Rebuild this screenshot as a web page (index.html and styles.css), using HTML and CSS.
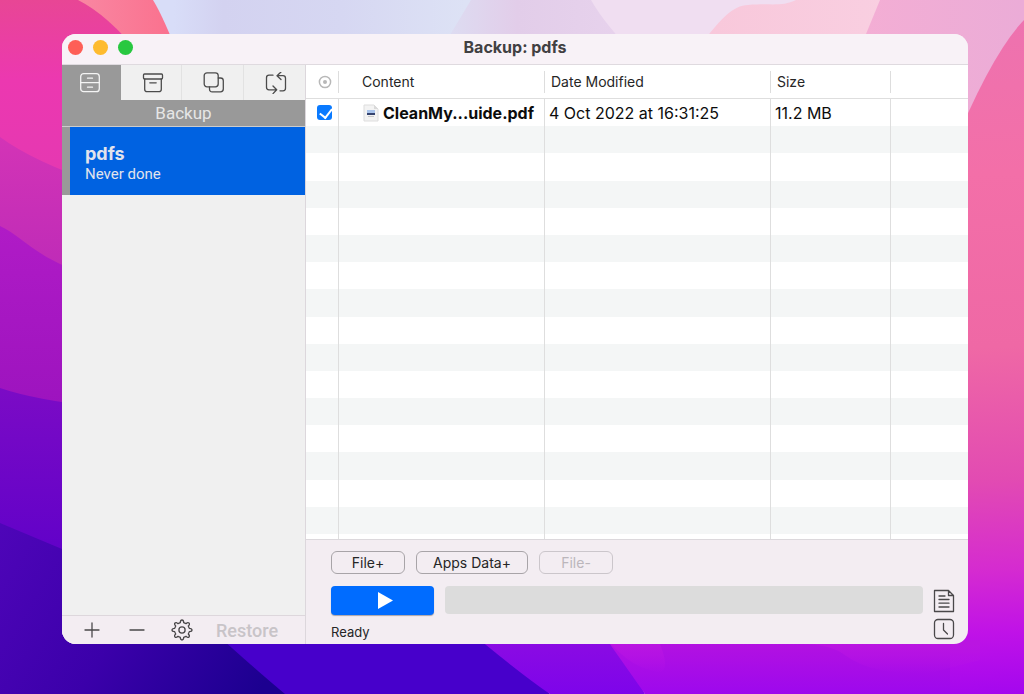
FILE: index.html
```html
<!DOCTYPE html>
<html lang="en">
<head>
<meta charset="utf-8">
<meta name="viewport" content="width=device-width, initial-scale=1">
<title>Backup: pdfs</title>
<link rel="stylesheet" href="styles.css">
</head>
<body>
<div class="desktop">
  <svg class="wallpaper" viewBox="0 0 1024 694" preserveAspectRatio="none" aria-hidden="true">
    <defs>
      <linearGradient id="sky" x1="0" x2="1" y1="0" y2="0"><stop offset="0" stop-color="#d8ddf8"/><stop offset=".28" stop-color="#d8ddf8"/><stop offset=".36" stop-color="#d3d2f0"/><stop offset=".55" stop-color="#d6d7f2"/><stop offset=".75" stop-color="#dde2f5"/><stop offset="1" stop-color="#dde2f5"/></linearGradient>
      <linearGradient id="coral" x1="0" x2="1" y1="0" y2="0"><stop offset="0" stop-color="#f98ba6"/><stop offset="1" stop-color="#fa6f8c"/></linearGradient>
      <linearGradient id="pink" x1="0" x2="0" y1="0" y2="1"><stop offset="0" stop-color="#e84695"/><stop offset=".4" stop-color="#ec38b0"/><stop offset="1" stop-color="#e338b2"/></linearGradient>
      <linearGradient id="rose" x1="0" x2="0" y1="0" y2="1"><stop offset="0" stop-color="#d334b6"/><stop offset="1" stop-color="#ba29b8"/></linearGradient>
      <linearGradient id="violet" x1="0" x2="0" y1="0" y2="1"><stop offset="0" stop-color="#b01bc6"/><stop offset="1" stop-color="#9912bd"/></linearGradient>
      <linearGradient id="purple" x1="0" x2="0" y1="0" y2="1"><stop offset="0" stop-color="#7b0bc5"/><stop offset="1" stop-color="#5d00c9"/></linearGradient>
      <linearGradient id="indigo" gradientUnits="userSpaceOnUse" x1="0" x2="260" y1="530" y2="690"><stop offset="0" stop-color="#4e05b8"/><stop offset=".5" stop-color="#3b00aa"/><stop offset="1" stop-color="#1c0090"/></linearGradient>
      <linearGradient id="right" gradientUnits="userSpaceOnUse" x1="980" x2="1010" y1="0" y2="694"><stop offset="0" stop-color="#ed73b0"/><stop offset=".25" stop-color="#f36fa8"/><stop offset=".5" stop-color="#ef68a5"/><stop offset=".69" stop-color="#e24bb2"/><stop offset=".82" stop-color="#d52bd0"/><stop offset=".91" stop-color="#c012e7"/><stop offset="1" stop-color="#a407ee"/></linearGradient>
      <linearGradient id="mauve" x1="0" x2="1" y1="0" y2="0"><stop offset="0" stop-color="#dcdff3"/><stop offset=".4" stop-color="#e2cde9"/><stop offset="1" stop-color="#e8d3ed"/></linearGradient>
      <linearGradient id="blush" x1="0" x2="1" y1="0" y2="0"><stop offset="0" stop-color="#f8c7da"/><stop offset="1" stop-color="#f9cfe1"/></linearGradient>
      <linearGradient id="orchid" x1="0" x2="1" y1="0" y2="0"><stop offset="0" stop-color="#f4aed4"/><stop offset="1" stop-color="#ebacd7"/></linearGradient>
      <linearGradient id="grape" x1="0" x2="0" y1="0" y2="1"><stop offset="0" stop-color="#910fdf"/><stop offset="1" stop-color="#7e04ea"/></linearGradient>
      <linearGradient id="magenta" gradientUnits="userSpaceOnUse" x1="0" x2="0" y1="640" y2="694"><stop offset="0" stop-color="#b412e0"/><stop offset="1" stop-color="#9d08ed"/></linearGradient>
      <linearGradient id="glow" gradientUnits="userSpaceOnUse" x1="0" x2="0" y1="644" y2="674"><stop offset="0" stop-color="#ba15e1"/><stop offset="1" stop-color="#b511e8" stop-opacity="0"/></linearGradient>
    </defs>
    <path fill="url(#sky)" d="M0 0H620V100H0z"/>
    <path fill="url(#mauve)" d="M471 0H600L640 60H435z"/>
    <path fill="#f0def1" d="M591 0H900V60H640Q605 25 591 0z"/>
    <path fill="url(#blush)" d="M690 60C722 15 733 6 748 5C772 3 782 7 796 0H890V60z"/>
    <path fill="url(#orchid)" d="M880 0H1024V140H850L866 34z"/>
    <path fill="url(#coral)" d="M60 0H153Q164 18 180 60H60z"/>
    <path fill="url(#pink)" d="M0 0H78Q108 15 140 55V200H0z"/>
    <path fill="url(#rose)" d="M0 137Q34 162 100 184V300H0z"/>
    <path fill="url(#violet)" d="M0 226C24 237 38 262 100 278V440H0z"/>
    <path fill="url(#purple)" d="M0 388Q35 400 100 407V580H0z"/>
    <path fill="url(#indigo)" d="M0 523L62 549L190 610Q225 640 286 694H0z"/>
    <path fill="#4700cb" d="M190 610H480L550 694H285Q250 665 190 610z"/>
    <path fill="url(#grape)" d="M450 615H607L645 694H550Q515 670 450 615z"/>
    <path fill="url(#magenta)" d="M600 630H1024V694H645z"/>
    <path fill="url(#right)" d="M1024 20Q991 54 950 155V694H1024z"/>
    <path fill="url(#glow)" d="M611 644H660Q674 680 650 670Q630 665 611 644zM800 644Q832 644 846 656Q875 676 930 673L980 660V640z"/>
  </svg>

  <main class="window">
    <header class="titlebar">
      <div class="lights">
        <button class="light close" aria-label="Close"></button>
        <button class="light minimize" aria-label="Minimize"></button>
        <button class="light expand" aria-label="Zoom"></button>
      </div>
      <h1 class="title">Backup: pdfs</h1>
    </header>

    <div class="body">
      <aside class="sidebar">
        <nav class="tabs" aria-label="Task type">
          <button class="tab active" aria-label="Backup">
            <svg class="icon" viewBox="0 0 22 22"><rect x="1.7" y="1.7" width="18.6" height="18" rx="3"/><path d="M1.7 10.7H20.3M8.5 6.2H13.5M8.5 15.2H13.5"/></svg>
          </button>
          <button class="tab" aria-label="Archive">
            <svg class="icon" viewBox="0 0 22 22"><rect x="1.5" y="2" width="19" height="5" rx="1"/><path d="M2.7 7V17.2Q2.7 19.7 5.2 19.7H16.8Q19.3 19.7 19.3 17.2V7M7.8 10.8H14.2"/></svg>
          </button>
          <button class="tab" aria-label="Clone">
            <svg class="icon" viewBox="0 0 22 22"><rect x="1.2" y=".8" width="14" height="14" rx="2.8"/><path d="M15.3 6H17.5Q20.3 6 20.3 8.8V17Q20.3 19.8 17.5 19.8H9.3Q6.5 19.8 6.5 17V14.8"/></svg>
          </button>
          <button class="tab" aria-label="Synchronize">
            <svg class="icon" viewBox="0 0 22 22"><path d="M8 3.2H4Q1.5 3.2 1.5 5.7V15.3Q1.5 17.8 4 17.8H11.5M8 14L11.7 17.8L8 21.6M15 18.8H18Q20.5 18.8 20.5 16.3V6.2Q20.5 3.7 18 3.7H12M16 0L12 3.7L16 7.5"/></svg>
          </button>
        </nav>
        <h2 class="section">Backup</h2>
        <button class="task">
          <span class="task-name">pdfs</span>
          <span class="task-state">Never done</span>
        </button>
        <div class="side-footer">
          <button class="tool" aria-label="Add"><svg class="icon" viewBox="0 0 22 22"><path d="M4 11H18M11 4V18"/></svg></button>
          <button class="tool" aria-label="Remove"><svg class="icon" viewBox="0 0 22 22"><path d="M4 11H18"/></svg></button>
          <button class="tool" aria-label="Settings"><svg class="icon" viewBox="0 0 22 22"><circle cx="11" cy="11" r="3.1"/><path d="M9.3 3.7Q9.4 1 11 1T12.7 3.7Q13.8 4.2 15 4.7Q16.8 2.9 18 4T17.3 7Q17.8 8.2 18.3 9.3Q21 9.5 21 11T18.3 12.7Q17.8 13.8 17.3 15Q19.1 16.8 18 18T15 17.3Q13.8 17.8 12.7 18.3Q12.6 21 11 21T9.3 18.3Q8.2 17.8 7 17.3Q5.2 19.1 4 18T4.7 15Q4.2 13.8 3.7 12.7Q1 12.5 1 11T3.7 9.3Q4.2 8.2 4.7 7Q2.9 5.2 4 4T7 4.7Q8.2 4.2 9.3 3.7z"/></svg></button>
          <button class="restore" disabled>Restore</button>
        </div>
      </aside>

      <section class="content">
        <div class="files">
          <table class="file-table">
            <colgroup><col class="col-check"><col class="col-name"><col class="col-date"><col class="col-size"><col></colgroup>
            <thead>
              <tr>
                <th class="target" aria-label="Included"><svg class="target-icon" viewBox="0 0 14 14"><circle cx="7" cy="7" r="5.6"/><circle class="dot" cx="7" cy="7" r="2"/></svg></th>
                <th class="name-head">Content</th><th>Date Modified</th><th>Size</th><th></th>
              </tr>
            </thead>
            <tbody>
              <tr>
                <td class="check-cell"><input class="check" type="checkbox" checked aria-label="Include CleanMy…uide.pdf"></td>
                <td><div class="file"><svg class="file-icon" viewBox="0 0 16 18"><path class="sheet" d="M1 1H11L15 5V17H1z"/><path class="fold" d="M11 1V5H15z"/><path class="photo" d="M4 6H12V9H4z"/><path class="band" d="M4 9H12V11H4z"/><path class="lines" d="M5 12H11V13H5z"/></svg><span class="file-name">CleanMy...uide.pdf</span></div></td>
                <td>4 Oct 2022 at 16:31:25</td><td>11.2 MB</td><td></td>
              </tr>
              <tr><td></td><td></td><td></td><td></td><td></td></tr>
              <tr><td></td><td></td><td></td><td></td><td></td></tr>
              <tr><td></td><td></td><td></td><td></td><td></td></tr>
              <tr><td></td><td></td><td></td><td></td><td></td></tr>
              <tr><td></td><td></td><td></td><td></td><td></td></tr>
              <tr><td></td><td></td><td></td><td></td><td></td></tr>
              <tr><td></td><td></td><td></td><td></td><td></td></tr>
              <tr><td></td><td></td><td></td><td></td><td></td></tr>
              <tr><td></td><td></td><td></td><td></td><td></td></tr>
              <tr><td></td><td></td><td></td><td></td><td></td></tr>
              <tr><td></td><td></td><td></td><td></td><td></td></tr>
              <tr><td></td><td></td><td></td><td></td><td></td></tr>
              <tr><td></td><td></td><td></td><td></td><td></td></tr>
              <tr><td></td><td></td><td></td><td></td><td></td></tr>
              <tr><td></td><td></td><td></td><td></td><td></td></tr>
            </tbody>
            <tfoot><tr><td></td><td></td><td></td><td></td><td></td></tr></tfoot>
          </table>
        </div>

        <footer class="controls">
          <div class="buttons">
            <button class="push">File+</button>
            <button class="push wide">Apps Data+</button>
            <button class="push" disabled>File-</button>
          </div>
          <div class="run">
            <div class="run-main">
              <div class="run-row">
                <button class="play" aria-label="Run"><svg class="play-icon" viewBox="0 0 16 18"><path d="M0 0L16 9L0 18z"/></svg></button>
                <progress class="bar" value="0" max="100" aria-label="Progress"></progress>
              </div>
              <p class="status">Ready</p>
            </div>
            <div class="run-side">
              <button class="tool" aria-label="Log"><svg class="icon" viewBox="0 0 22 24"><path d="M1.5 1.5H15.5L20.5 6.5V22.5H1.5zM15.5 1.5V6.5H20.5M6 7H12M6 10.5H16M6 14.2H16M6 18H16"/></svg></button>
              <button class="tool" aria-label="Schedule"><svg class="icon" viewBox="0 0 22 22"><rect x="1.5" y="1.5" width="19" height="19" rx="3.5"/><path d="M10.5 5.5V12L14.5 16"/></svg></button>
            </div>
          </div>
        </footer>
      </section>
    </div>
  </main>
</div>
</body>
</html>
```
FILE: styles.css
```css
* { box-sizing: border-box; }

body {
  margin: 0;
  font-family: Inter, "Liberation Sans", sans-serif;
  font-size: 13px;
  color: #262626;
}

button {
  margin: 0;
  padding: 0;
  border: 0;
  background: none;
  font: inherit;
  color: inherit;
}

.desktop {
  position: relative;
  display: flex;
  min-height: 100vh;
  padding: 34px 56px 50px 62px;
  overflow: hidden;
}

.wallpaper {
  position: absolute;
  inset: 0;
  width: 100%;
  height: 100%;
}

.window {
  position: relative;
  flex: 1;
  display: flex;
  flex-direction: column;
  min-width: 0;
  border-radius: 14px;
  overflow: hidden;
  background: #f3edf2;
}

.titlebar {
  display: grid;
  grid-template-columns: 1fr auto 1fr;
  align-items: center;
  height: 31px;
  padding: 0 6px;
  background: #f8f2f7;
  border-bottom: 1px solid #dfdadf;
}

.lights { display: flex; gap: 10px; padding-bottom: 4px; }
.light { width: 15px; height: 15px; border-radius: 50%; }
.close { background: #fe5f57; }
.minimize { background: #febb2e; }
.expand { background: #28c840; }

.title {
  margin: 0;
  padding-bottom: 5px;
  font-size: 16px;
  font-weight: 700;
  line-height: 20px;
  color: #414042;
}

.body { flex: 1; display: flex; min-height: 0; }

.icon {
  display: block;
  width: 22px;
  fill: none;
  stroke: currentColor;
  stroke-width: 1.3;
  stroke-linecap: round;
  stroke-linejoin: round;
}

.sidebar {
  display: flex;
  flex-direction: column;
  width: 244px;
  flex-shrink: 0;
  background: #f0f0f0;
  border-right: 1px solid #dcd7dc;
}

.tabs { display: grid; grid-template-columns: 59px 1fr 1fr 1fr; height: 35px; }

.tab {
  display: flex;
  align-items: center;
  justify-content: center;
  padding-left: 4px;
  border-right: 1px solid #e2e2e2;
  color: #4b4b4b;
}

.tab:last-child { border-right: 0; }
.active { padding: 0 4px 0 0; background: #999; color: #f4f4f4; border-right: 0; }

.section {
  margin: 0;
  background: #999;
  border-bottom: 1px solid #ccc;
  color: #e6e6e6;
  font-family: Roboto, "Liberation Sans", sans-serif;
  font-size: 17px;
  font-weight: 400;
  line-height: 26px;
  text-align: center;
}

.task {
  display: flex;
  flex-direction: column;
  justify-content: center;
  height: 68px;
  padding: 6px 16px 0 15px;
  border-left: 8px solid #999;
  background: #0062e1;
  color: #e2e4ec;
  text-align: left;
}

.task-name { font-size: 18px; font-weight: 700; line-height: 20px; }
.task-state { font-family: Roboto, "Liberation Sans", sans-serif; font-size: 15px; line-height: 20px; }

.side-footer {
  display: flex;
  align-items: center;
  gap: 23px;
  height: 29px;
  margin-top: auto;
  padding-left: 19px;
  border-top: 1px solid #ddd7dc;
  background: #f3edf2;
}

.tool { color: #4a484a; }
.restore { color: #c8c4c8; font-family: Roboto, "Liberation Sans", sans-serif; font-size: 18px; font-weight: 500; }

.content { flex: 1; display: flex; flex-direction: column; min-width: 0; }
.files { flex: 1; display: flex; background: #fff; }

.file-table {
  flex: 1;
  width: 100%;
  table-layout: fixed;
  border-collapse: separate;
  border-spacing: 0;
  font-size: 16px;
  color: #0c0c0c;
}

.col-check { width: 33px; }
.col-name { width: 206px; }
.col-date { width: 226px; }
.col-size { width: 120px; }

.file-table th {
  height: 34px;
  padding: 0 6px;
  border-bottom: 1px solid #dedede;
  background: linear-gradient(#ddd, #ddd) right center / 1px 22px no-repeat;
  font-size: 14px;
  font-weight: 400;
  text-align: left;
  color: #262626;
}

.file-table th:last-child { background: none; }
.file-table .name-head { padding-left: 23px; }
.file-table .target { padding: 0 0 0 12px; }

.file-table td { height: 27px; padding: 0 4px; border-right: 1px solid #dedede; line-height: 20px; white-space: nowrap; }
.file-table td:last-child { border-right: 0; }
.file-table tbody tr:nth-child(even) { background: #f4f6f6; }
.file-table tfoot td { height: 5px; line-height: 0; }

.target-icon { display: block; width: 14px; fill: none; stroke: #b8b8b8; stroke-width: 1.5; }
.dot { fill: #b8b8b8; stroke: none; }

.file-table .check-cell { padding-left: 11px; }

.check {
  display: block;
  width: 15px;
  height: 15px;
  margin: 0;
  appearance: none;
  border-radius: 3px;
  background: #0a7aff;
  overflow: hidden;
}

.check::before {
  content: "";
  display: block;
  width: 6px;
  height: 10px;
  margin: 1px 5px;
  border: solid #fff;
  border-width: 0 2px 2px 0;
  transform: rotate(38deg);
}

.file { display: flex; align-items: center; gap: 4px; padding-left: 20px; }
.file-icon { width: 16px; height: 18px; flex-shrink: 0; }
.sheet { fill: #f3f3f3; stroke: #ddd; stroke-width: 1; }
.fold { fill: #d9d9d9; }
.photo { fill: #a9c4ec; }
.band { fill: #35446f; }
.lines { fill: #c8c8c8; }
.file-name { font-weight: 700; }

.controls {
  padding: 11px 13px 0 25px;
  border-top: 1px solid #dcd8dc;
  height: 105px;
}

.buttons { display: flex; gap: 11px; margin-bottom: 12px; }

.push {
  width: 74px;
  height: 23px;
  border: 1px solid #a8a4a8;
  border-radius: 6px;
  font-size: 14px;
}

.wide { width: 112px; }
.push:disabled { color: #bbb6bb; border-color: #cbc6cb; }

.run { display: flex; gap: 10px; }
.run-main { flex: 1; min-width: 0; }
.run-row { display: flex; gap: 11px; }

.play {
  display: flex;
  align-items: center;
  justify-content: center;
  width: 103px;
  height: 29px;
  padding-left: 5px;
  border-radius: 4px;
  background: #006cff;
  box-shadow: 0 1px 1px #a9a4a9;
}

.play-icon { width: 15px; fill: #fff; }

.bar {
  flex: 1;
  min-width: 0;
  height: 28px;
  border: 0;
  border-radius: 4px;
  appearance: none;
  background: #dcdcdc;
  overflow: hidden;
}

.bar::-webkit-progress-bar { background: #dcdcdc; }
.bar::-webkit-progress-value { background: #006cff; }

.status { margin: 7px 0 0; line-height: 20px; }
.run-side { display: flex; flex-direction: column; gap: 5px; padding-top: 3px; }
```
